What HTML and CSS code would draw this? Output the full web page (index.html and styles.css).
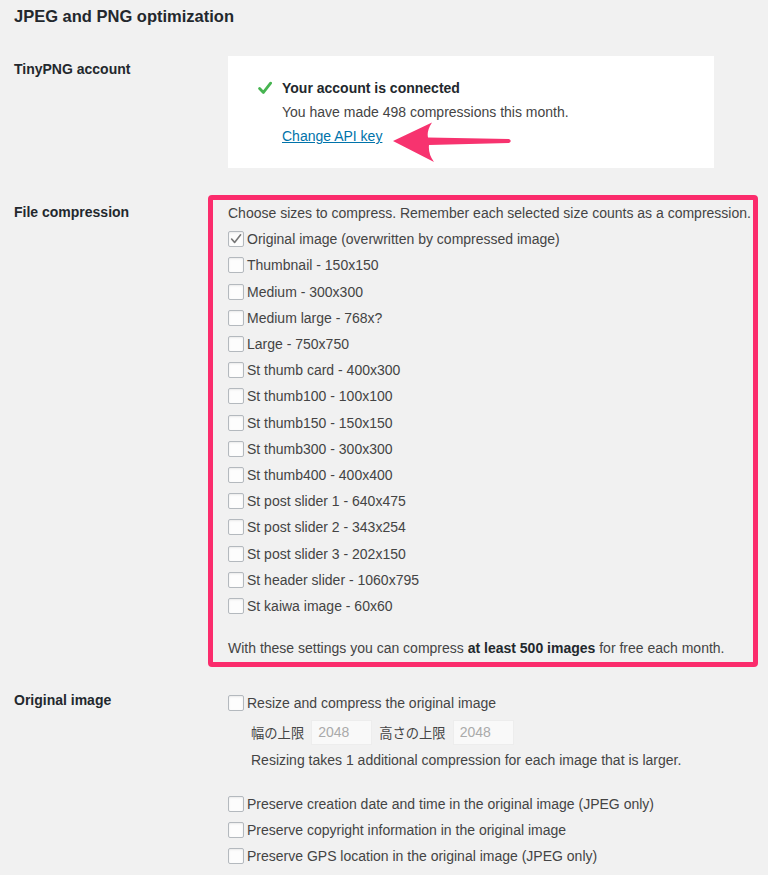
FILE: index.html
```html
<!DOCTYPE html>
<html lang="en">
<head>
    <meta charset="UTF-8">
    <title>JPEG and PNG optimization</title>
    <link rel="stylesheet" href="styles.css">
</head>
<body>
    <div class="page">
        <h2 class="title">JPEG and PNG optimization</h2>

        <div class="form-row account-row">
            <div class="row-label">TinyPNG account</div>
            <div class="row-field">
                <div class="account-box">
                    <svg class="ok-icon" width="14" height="24" viewBox="0 0 14 24">
                        <path d="M1.6 12.6 L5.4 16.4 L12.6 7.2" fill="none" stroke="#46b450" stroke-width="2.8" stroke-linecap="round" stroke-linejoin="round"/>
                    </svg>
                    <div class="account-text">
                        <p class="connected">Your account is connected</p>
                        <p>You have made 498 compressions this month.</p>
                        <p><a href="#" class="change-key">Change API key</a></p>
                    </div>
                    <svg class="pointer-arrow" width="130" height="50" viewBox="388 116 130 50">
                        <path d="M393 141 L432 122.5 Q426.5 131 428 137.5 L509 139 Q512.5 141 509 143 L429 145 Q428 154 434 162 Z" fill="#f7336f"/>
                    </svg>
                </div>
            </div>
        </div>

        <div class="form-row compression-row">
            <div class="row-label">File compression</div>
            <div class="row-field">
                <div class="highlight">
                    <div class="line">Choose sizes to compress. Remember each selected size counts as a compression.</div>
                    <label class="line"><span class="box checked"><svg width="14" height="14" viewBox="0 0 14 14"><path d="M2.6 7 L5.6 10.4 L11.6 2.8" fill="none" stroke="#777" stroke-width="1.6" stroke-linecap="round" stroke-linejoin="round"/></svg></span>Original image (overwritten by compressed image)</label>
                    <label class="line"><span class="box"></span>Thumbnail - 150x150</label>
                    <label class="line"><span class="box"></span>Medium - 300x300</label>
                    <label class="line"><span class="box"></span>Medium large - 768x?</label>
                    <label class="line"><span class="box"></span>Large - 750x750</label>
                    <label class="line"><span class="box"></span>St thumb card - 400x300</label>
                    <label class="line"><span class="box"></span>St thumb100 - 100x100</label>
                    <label class="line"><span class="box"></span>St thumb150 - 150x150</label>
                    <label class="line"><span class="box"></span>St thumb300 - 300x300</label>
                    <label class="line"><span class="box"></span>St thumb400 - 400x400</label>
                    <label class="line"><span class="box"></span>St post slider 1 - 640x475</label>
                    <label class="line"><span class="box"></span>St post slider 2 - 343x254</label>
                    <label class="line"><span class="box"></span>St post slider 3 - 202x150</label>
                    <label class="line"><span class="box"></span>St header slider - 1060x795</label>
                    <label class="line"><span class="box"></span>St kaiwa image - 60x60</label>
                    <div class="line savings">With these settings you can compress <strong>at least 500 images</strong> for free each month.</div>
                </div>
            </div>
        </div>

        <div class="form-row original-row">
            <div class="row-label">Original image</div>
            <div class="row-field">
                <label class="line"><span class="box"></span>Resize and compress the original image</label>
                <div class="dims">
                    <span class="dim-label">幅の上限</span>
                    <input class="dim-input" type="text" placeholder="2048">
                    <span class="dim-label">高さの上限</span>
                    <input class="dim-input" type="text" placeholder="2048">
                </div>
                <div class="line resize-note">Resizing takes 1 additional compression for each image that is larger.</div>
                <div class="preserve">
                    <label class="line"><span class="box"></span>Preserve creation date and time in the original image (JPEG only)</label>
                    <label class="line"><span class="box"></span>Preserve copyright information in the original image</label>
                    <label class="line"><span class="box"></span>Preserve GPS location in the original image (JPEG only)</label>
                </div>
            </div>
        </div>
    </div>
</body>
</html>
```

FILE: styles.css
```css
body, html {
    margin: 0;
    padding: 0;
    background-color: #f1f1f1;
    font-family: "Liberation Sans", Arial, sans-serif;
    font-size: 14px;
    color: #444;
}
.page {
    padding-left: 14px;
}
.title {
    margin: 0;
    padding-top: 6px;
    font-size: 16.5px;
    line-height: 20px;
    font-weight: bold;
    color: #23282d;
}
.form-row {
    display: flex;
}
.row-label {
    width: 214px;
    flex: none;
    font-weight: bold;
    line-height: 20px;
    color: #23282d;
}
.row-field {
    flex: 1;
}

/* account */
.account-row {
    margin-top: 30px;
}
.account-row .row-label {
    padding-top: 3px;
}
.account-box {
    position: relative;
    width: 486px;
    height: 112px;
    box-sizing: border-box;
    background-color: #fff;
    padding: 20px 30px;
    display: flex;
    gap: 10px;
}
.ok-icon {
    flex: none;
}
.account-text p {
    margin: 0;
    line-height: 24px;
}
.connected {
    font-weight: bold;
    color: #23282d;
}
.change-key {
    color: #0073aa;
    text-decoration: underline;
}
.pointer-arrow {
    position: absolute;
    left: 160px;
    top: 60px;
}

/* compression sizes */
.compression-row {
    margin-top: 27px;
}
.compression-row .row-label {
    padding-top: 7px;
}
.highlight {
    width: 550px;
    margin-left: -20px;
    box-sizing: border-box;
    border: 5px solid #fb2c6c;
    border-radius: 4px;
    padding: 0 0 1px 15px;
}
.line {
    display: flex;
    align-items: center;
    height: 26.2px;
    white-space: nowrap;
}
.highlight .savings {
    display: block;
    line-height: 26.2px;
    margin-top: 15.7px;
}
.savings strong {
    color: #23282d;
}
.box {
    width: 16px;
    height: 16px;
    flex: none;
    box-sizing: border-box;
    margin-right: 3px;
    border: 1px solid #b4b9be;
    border-radius: 2px;
    background-color: #fdfdfd;
    box-shadow: inset 0 1px 2px rgba(0, 0, 0, 0.08);
    display: flex;
    align-items: center;
    justify-content: center;
}

/* original image */
.original-row {
    margin-top: 23px;
}
.original-row .line {
    height: 26px;
}
.dims {
    display: flex;
    align-items: center;
    gap: 7px;
    height: 25px;
    margin: 4px 0 0 23px;
}
.dim-label {
    font-family: "Noto Sans CJK JP", sans-serif;
    font-size: 13.3px;
    color: #444;
}
.dim-input {
    width: 61px;
    height: 25px;
    box-sizing: border-box;
    padding: 0 6px;
    border: 1px solid #ededed;
    background-color: #f9f9f9;
    font-family: "Liberation Sans", Arial, sans-serif;
    font-size: 14px;
}
.dim-input::placeholder {
    color: #aaa;
}
.original-row .resize-note {
    margin: 2px 0 0 23px;
}
.preserve {
    margin-top: 18px;
}
```
